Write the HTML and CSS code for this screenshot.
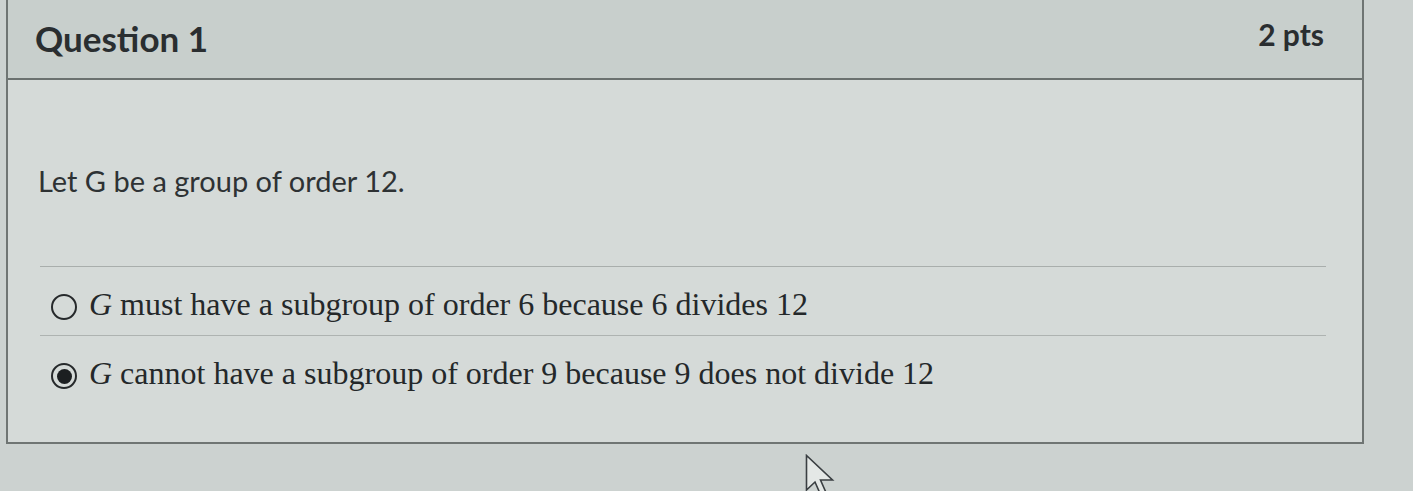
FILE: index.html
```html
<!DOCTYPE html>
<html lang="en">
<head>
<meta charset="utf-8">
<title>Question 1</title>
<link rel="stylesheet" href="styles.css">
</head>
<body>
<div class="page">
  <div class="card">
    <div class="header">
      <h2 class="title">Question 1</h2>
      <span class="pts">2 pts</span>
    </div>
    <div class="content">
      <p class="stem">Let G be a group of order 12.</p>
      <div class="answers">
        <label class="answer">
          <span class="radio"></span>
          <span class="label"><i>G</i> must have a subgroup of order 6 because 6 divides 12</span>
        </label>
        <label class="answer">
          <span class="radio checked"><span class="dot"></span></span>
          <span class="label"><i>G</i> cannot have a subgroup of order 9 because 9 does not divide 12</span>
        </label>
      </div>
    </div>
  </div>
  <svg class="cursor" width="34" height="44" viewBox="0 0 34 44">
    <path d="M1.5 1.5 L1.5 36 L10 28 L15.5 40.5 L21 38.5 L15.5 26 L27.5 26 Z" fill="#e4e8e6" stroke="#3a3f42" stroke-width="1.6" stroke-linejoin="miter"/>
  </svg>
</div>
</body>
</html>
```
FILE: styles.css
```css
* { box-sizing: border-box; }
html, body {
  margin: 0;
  padding: 0;
  width: 1413px;
  height: 491px;
  overflow: hidden;
  background: #ccd2d0;
}
.page {
  position: relative;
  width: 1413px;
  height: 491px;
  padding-left: 6px;
}
.card {
  width: 1358px;
  border-left: 2px solid #6f7573;
  border-right: 2px solid #6f7573;
  border-bottom: 2px solid #6f7573;
  background: #d5dad8;
}
.header {
  height: 80px;
  display: flex;
  justify-content: space-between;
  align-items: flex-start;
  padding: 0 38px 0 27px;
  background: #c8cfcc;
  border-bottom: 2px solid #6b716f;
}
.title {
  margin: 17px 0 0;
  font-family: Lato, "Open Sans", sans-serif;
  font-weight: 700;
  font-size: 35px;
  line-height: 1.2;
  color: #2a2e30;
}
.pts {
  margin-top: 16px;
  font-family: Lato, "Open Sans", sans-serif;
  font-weight: 700;
  font-size: 30px;
  line-height: 1.2;
  color: #2a2e30;
}
.content {
  padding: 83px 36px 38px 30px;
}
.stem {
  margin: 0 0 67px;
  font-family: Lato, "Open Sans", sans-serif;
  font-size: 29px;
  line-height: 36px;
  color: #2e3234;
}
.answers {
  display: flex;
  flex-direction: column;
  margin-left: 2px;
}
.answer {
  display: flex;
  align-items: flex-start;
  gap: 12px;
  padding: 18px 0 12px 11px;
  border-top: 1px solid #a9aeac;
}
.answer + .answer {
  border-top: 1px solid #aeb3b1;
}
.radio {
  flex: none;
  width: 26px;
  height: 26px;
  margin-top: 9px;
  border-radius: 50%;
  border: 2.5px solid #26292b;
  display: flex;
  align-items: center;
  justify-content: center;
}
.dot {
  width: 15px;
  height: 15px;
  border-radius: 50%;
  background: #1c1f21;
}
.label {
  font-family: "Liberation Serif", "Times New Roman", serif;
  font-size: 32px;
  line-height: 38px;
  color: #24282a;
}
.label i {
  font-style: italic;
}
.cursor {
  position: absolute;
  left: 805px;
  top: 454px;
}
```
